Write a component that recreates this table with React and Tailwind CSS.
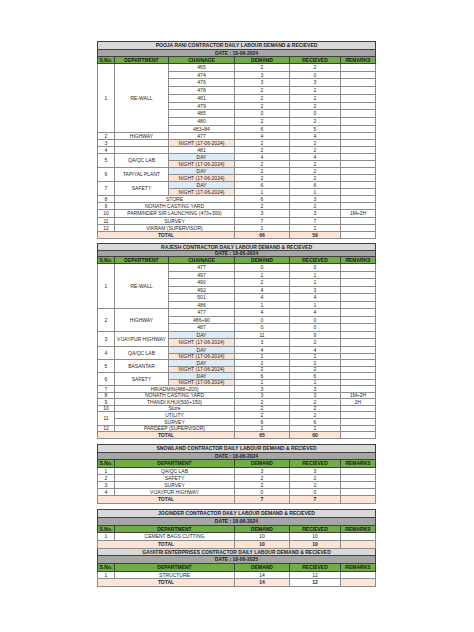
import React from 'react';

const Cell = ({ children, className = '', ...props }) => (
  <td
    className={`border border-[#8c8c8c] p-0 text-center align-middle leading-none whitespace-nowrap overflow-hidden ${className}`}
    {...props}
  >
    {children}
  </td>
);

const DAY = 'bg-[#ddebf7]';
const NIGHT = 'bg-[#fce4d6]';
const PEACH = 'bg-[#fce4d6]';

const H = { 6: 'h-[6px]', 7: 'h-[7px]', 8: 'h-[8px]' };

// row heights of the sheet are not even, walk them in order
function heights(list) {
  let i = 0;
  return () => H[list[i++] || 7];
}

const poojaRows = [
  {
    sn: 1, dept: 'RE-WALL', items: [
      { ch: '465', d: 2, r: 2 }, { ch: '474', d: 3, r: 0 }, { ch: '476', d: 3, r: 3 },
      { ch: '478', d: 2, r: 2 }, { ch: '481', d: 2, r: 2 }, { ch: '479', d: 2, r: 2 },
      { ch: '485', d: 0, r: 0 }, { ch: '480', d: 2, r: 2 }, { ch: '483+84', d: 6, r: 5 },
    ],
  },
  { sn: 2, dept: 'HIGHWAY', items: [{ ch: '477', d: 4, r: 4 }] },
  { sn: 3, dept: '', items: [{ ch: 'NIGHT (17-06-2024)', d: 2, r: 2, k: NIGHT }] },
  { sn: 4, dept: '', items: [{ ch: '481', d: 2, r: 2 }] },
  { sn: 5, dept: 'QA/QC LAB', items: [{ ch: 'DAY', d: 4, r: 4, k: DAY }, { ch: 'NIGHT (17-06-2024)', d: 2, r: 2, k: NIGHT }] },
  { sn: 6, dept: 'TAPIYAL PLANT', items: [{ ch: 'DAY', d: 2, r: 2, k: DAY }, { ch: 'NIGHT (17-06-2024)', d: 2, r: 2, k: NIGHT }] },
  { sn: 7, dept: 'SAFETY', items: [{ ch: 'DAY', d: 6, r: 6, k: DAY }, { ch: 'NIGHT (17-06-2024)', d: 1, r: 1, k: NIGHT }] },
  { sn: 8, name: 'STORE', d: 6, r: 3 },
  { sn: 9, name: 'NONATH CASTING YARD', d: 2, r: 2 },
  { sn: 10, name: 'PARMINDER SIR LAUNCHING (473+300)', d: 3, r: 3, rem: '1M+2H' },
  { sn: 11, name: 'SURVEY', d: 7, r: 7 },
  { sn: 12, name: 'VIKRAM (SUPERVISOR)', d: 1, r: 1 },
];

const rajeshRows = [
  {
    sn: 1, dept: 'RE-WALL', items: [
      { ch: '477', d: 0, r: 0 }, { ch: '497', d: 1, r: 1 }, { ch: '490', d: 2, r: 1 },
      { ch: '492', d: 4, r: 3 }, { ch: '501', d: 4, r: 4 }, { ch: '486', d: 1, r: 1 },
    ],
  },
  { sn: 2, dept: 'HIGHWAY', items: [{ ch: '477', d: 4, r: 4 }, { ch: '486+90', d: 0, r: 0 }, { ch: '487', d: 0, r: 0 }] },
  { sn: 3, dept: 'VIJAYPUR HIGHWAY', items: [{ ch: 'DAY', d: 11, r: 9, k: DAY }, { ch: 'NIGHT (17-06-2024)', d: 3, r: 2, k: NIGHT }] },
  { sn: 4, dept: 'QA/QC LAB', items: [{ ch: 'DAY', d: 4, r: 4, k: DAY }, { ch: 'NIGHT (17-06-2024)', d: 1, r: 1, k: NIGHT }] },
  { sn: 5, dept: 'BASANTAR', items: [{ ch: 'DAY', d: 2, r: 2, k: DAY }, { ch: 'NIGHT (17-06-2024)', d: 2, r: 2, k: NIGHT }] },
  { sn: 6, dept: 'SAFETY', items: [{ ch: 'DAY', d: 6, r: 6, k: DAY }, { ch: 'NIGHT (17-06-2024)', d: 1, r: 1, k: NIGHT }] },
  { sn: 7, name: 'HR/ADMIN(488+200)', d: 3, r: 3 },
  { sn: 8, name: 'NONATH CASTING YARD', d: 3, r: 3, rem: '1M+2H' },
  { sn: 9, name: 'THANDI KHUI(500+150)', d: 2, r: 2, rem: '2H' },
  { sn: 10, name: 'Store', d: 2, r: 2 },
  { sn: 11, spans: [{ name: 'UTILITY', d: 2, r: 2 }, { name: 'SURVEY', d: 6, r: 6 }] },
  { sn: 12, name: 'PARDEEP (SUPERVISOR)', d: 1, r: 1 },
];

function bodyRows(rows, rh) {
  const out = [];
  rows.forEach((g) => {
    if (g.items) {
      const n = g.items.length;
      g.items.forEach((it, i) => {
        out.push(
          <tr key={`${g.sn}-${i}`} className={rh()}>
            {i === 0 && (
              <>
                <Cell rowSpan={n}>{g.sn}</Cell>
                <Cell rowSpan={n}>{g.dept}</Cell>
              </>
            )}
            <Cell className={it.k || ''}>{it.ch}</Cell>
            <Cell>{it.d}</Cell>
            <Cell>{it.r}</Cell>
            <Cell>{it.rem || ''}</Cell>
          </tr>
        );
      });
    } else if (g.spans) {
      g.spans.forEach((s, i) => {
        out.push(
          <tr key={`${g.sn}-${i}`} className={rh()}>
            {i === 0 && <Cell rowSpan={g.spans.length}>{g.sn}</Cell>}
            <Cell colSpan={2}>{s.name}</Cell>
            <Cell>{s.d}</Cell>
            <Cell>{s.r}</Cell>
            <Cell>{s.rem || ''}</Cell>
          </tr>
        );
      });
    } else {
      out.push(
        <tr key={g.sn} className={rh()}>
          <Cell>{g.sn}</Cell>
          <Cell colSpan={2}>{g.name}</Cell>
          <Cell>{g.d}</Cell>
          <Cell>{g.r}</Cell>
          <Cell>{g.rem || ''}</Cell>
        </tr>
      );
    }
  });
  return out;
}

const Cols = () => (
  <colgroup>
    <col className="w-[17px]" />
    <col className="w-[54px]" />
    <col className="w-[66px]" />
    <col className="w-[55px]" />
    <col className="w-[51px]" />
    <col className="w-[35px]" />
  </colgroup>
);

const HEAD = 'bg-[#70ad47] font-bold border-[#404040] text-[#1a1a1a]';

const HeadRows = ({ title, date, rh, merged }) => (
  <>
    <tr className={rh()}>
      <Cell colSpan={6} className="bg-[#d9d9d9] font-bold border-[#404040]">{title}</Cell>
    </tr>
    <tr className={rh()}>
      <Cell colSpan={6} className="bg-[#a6a6a6] font-bold border-[#404040]">{date}</Cell>
    </tr>
    <tr className={rh()}>
      <Cell className={HEAD}>S.No.</Cell>
      {merged ? (
        <Cell colSpan={2} className={HEAD}>DEPARTMENT</Cell>
      ) : (
        <>
          <Cell className={HEAD}>DEPARTMENT</Cell>
          <Cell className={HEAD}>CHAINAGE</Cell>
        </>
      )}
      <Cell className={HEAD}>DEMAND</Cell>
      <Cell className={HEAD}>RECIEVED</Cell>
      <Cell className={HEAD}>REMARKS</Cell>
    </tr>
  </>
);

const TotalRow = ({ d, r, rh, dBg = PEACH, rBg = PEACH, remBg = '' }) => (
  <tr className={rh()}>
    <Cell colSpan={3} className={`${PEACH} font-bold`}>TOTAL</Cell>
    <Cell className={`${dBg} font-bold`}>{d}</Cell>
    <Cell className={`${rBg} font-bold`}>{r}</Cell>
    <Cell className={remBg}></Cell>
  </tr>
);

const Sheet = ({ className = '', children }) => (
  <table className={`w-[278px] table-fixed border-collapse border-[1.5px] border-[#404040] ${className}`}>
    <Cols />
    <tbody>{children}</tbody>
  </table>
);

const SimpleRow = ({ sn, name, d, r, rh }) => (
  <tr className={rh()}>
    <Cell>{sn}</Cell>
    <Cell colSpan={2}>{name}</Cell>
    <Cell>{d}</Cell>
    <Cell>{r}</Cell>
    <Cell></Cell>
  </tr>
);

export default function App() {
  const rh1 = heights([8, 7, 8, 8, 8, 7, 8, 8, 7, 7, 7, 7, 7, 7, 7, 7, 7, 7, 7, 7, 8, 7, 7, 8, 7, 7, 7]);
  const rh2 = heights([8, 7, 8, 7, 8, 7, 8, 7, 8, 7, 8, 7, 6, 7, 6, 7, 6, 7, 6, 7, 6, 7, 7, 6, 7, 6, 7, 7, 6]);
  const rh3 = heights([8, 7, 8, 7, 7, 7, 7, 8]);
  const rh4 = heights([8, 8, 7, 8, 8, 7, 8, 8, 7, 8]);

  return (
    <div className="min-h-[632px] w-[474px] bg-white pt-[41px] pl-[97px] text-[5px] text-[#262626] font-['Liberation_Sans',Arial,sans-serif]">
      <Sheet>
        <HeadRows title="POOJA RANI CONTRACTOR DAILY LABOUR DEMAND & RECIEVED" date="DATE : 18-06-2024" rh={rh1} />
        {bodyRows(poojaRows, rh1)}
        <TotalRow d={66} r={59} rh={rh1} />
      </Sheet>

      <Sheet className="mt-[4px]">
        <HeadRows title="RAJESH CONTRACTOR DAILY LABOUR DEMAND & RECIEVED" date="DATE : 18-06-2024" rh={rh2} />
        {bodyRows(rajeshRows, rh2)}
        <TotalRow d={65} r={60} rh={rh2} />
      </Sheet>

      <Sheet className="mt-[5px]">
        <HeadRows title="SNOWLAND CONTRACTOR DAILY LABOUR DEMAND & RECIEVED" date="DATE : 18-06-2024" rh={rh3} merged />
        <SimpleRow sn={1} name="QA/QC LAB" d={3} r={3} rh={rh3} />
        <SimpleRow sn={2} name="SAFETY" d={2} r={2} rh={rh3} />
        <SimpleRow sn={3} name="SURVEY" d={2} r={2} rh={rh3} />
        <SimpleRow sn={4} name="VIJAYPUR HIGHWAY" d={0} r={0} rh={rh3} />
        <TotalRow d={7} r={7} rh={rh3} remBg={PEACH} />
      </Sheet>

      <Sheet className="mt-[5px]">
        <HeadRows title="JOGINDER CONTRACTOR DAILY LABOUR DEMAND & RECIEVED" date="DATE : 18-06-2024" rh={rh4} merged />
        <SimpleRow sn={1} name="CEMENT BAGS CUTTING" d={10} r={10} rh={rh4} />
        <TotalRow d={10} r={10} rh={rh4} remBg={PEACH} />
        <HeadRows title="GAYATRI ENTERPRISES CONTRACTOR DAILY LABOUR DEMAND & RECIEVED" date="DATE : 18-06-2025" rh={rh4} merged />
        <SimpleRow sn={1} name="STRUCTURE" d={14} r={12} rh={rh4} />
        <TotalRow d={14} r={12} rh={rh4} rBg="bg-white" remBg={PEACH} />
      </Sheet>
    </div>
  );
}
